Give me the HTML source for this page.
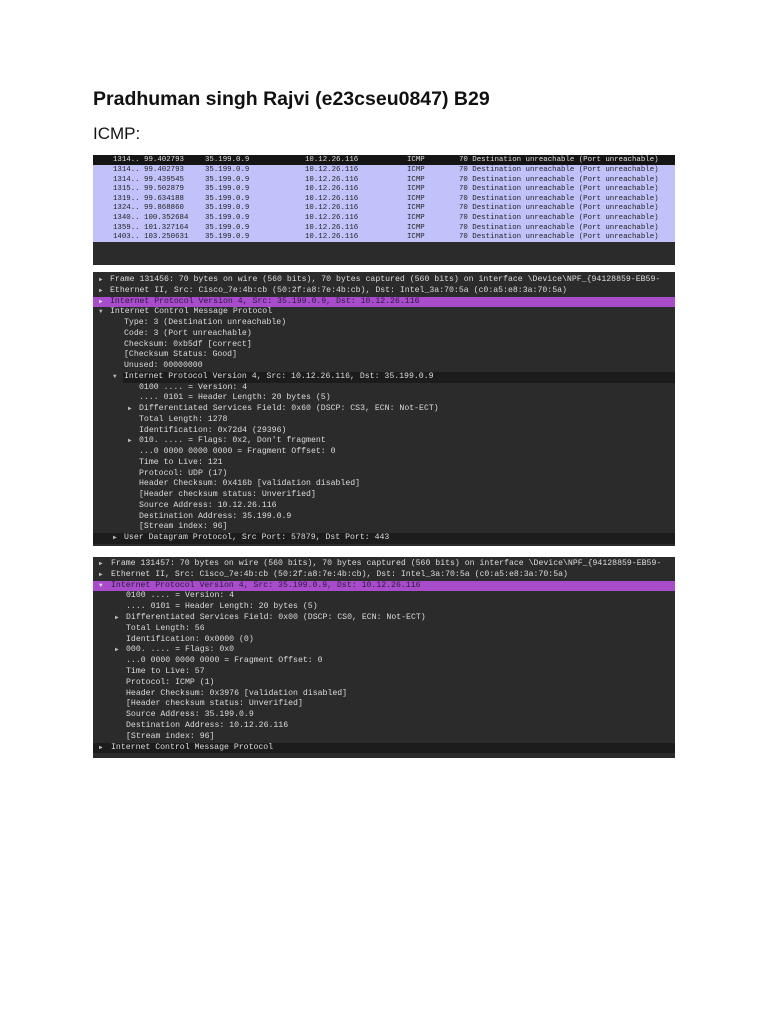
<!DOCTYPE html>
<html><head><meta charset="utf-8"><style>
body{margin:0;background:#fff;width:768px;height:1024px;position:relative;overflow:hidden}
.h1{position:absolute;left:93px;top:88px;font:bold 19.5px "Liberation Sans",sans-serif;color:#111}
.h2{position:absolute;left:93px;top:124px;font:17px "Liberation Sans",sans-serif;color:#111}
.p{position:absolute;left:93px;width:582px;background:#2b2b2b;overflow:hidden}
.l{position:absolute;left:0;right:0;height:10.75px;font:8.2px/10.75px "Liberation Mono",monospace;color:#dcdcdc;white-space:pre}
.l span{position:absolute}
.a{position:absolute;font-size:6px;color:#bbb}
.sel{background:#a84ccc;color:#2a1a3a}
.dk{background:#1c1c1c}
.r{position:absolute;left:0;right:0;height:9.6px;font:7.4px/9.6px "Liberation Mono",monospace;color:#222;background:#c2c2fa;white-space:pre}
.r span{position:absolute;top:1px;line-height:9.6px;height:9.6px}
</style></head><body>
<div class="h1">Pradhuman singh Rajvi (e23cseu0847) B29</div>
<div class="h2">ICMP:</div>

<div class="p" style="top:155px;height:110px;background:#2b2b2b">
<div class="r" style="top:0;background:#151515;color:#e0e0e0;height:10px"><span style="left:20px">1314.. 99.402793</span><span style="left:112px">35.199.0.9</span><span style="left:212px">10.12.26.116</span><span style="left:314px">ICMP</span><span style="left:366px">70 Destination unreachable (Port unreachable)</span></div>
<div class="r" style="top:10px"><span style="left:20px">1314.. 99.402793</span><span style="left:112px">35.199.0.9</span><span style="left:212px">10.12.26.116</span><span style="left:314px">ICMP</span><span style="left:366px">70 Destination unreachable (Port unreachable)</span></div>
<div class="r" style="top:19.6px"><span style="left:20px">1314.. 99.439545</span><span style="left:112px">35.199.0.9</span><span style="left:212px">10.12.26.116</span><span style="left:314px">ICMP</span><span style="left:366px">70 Destination unreachable (Port unreachable)</span></div>
<div class="r" style="top:29.2px"><span style="left:20px">1315.. 99.502879</span><span style="left:112px">35.199.0.9</span><span style="left:212px">10.12.26.116</span><span style="left:314px">ICMP</span><span style="left:366px">70 Destination unreachable (Port unreachable)</span></div>
<div class="r" style="top:38.8px"><span style="left:20px">1319.. 99.634188</span><span style="left:112px">35.199.0.9</span><span style="left:212px">10.12.26.116</span><span style="left:314px">ICMP</span><span style="left:366px">70 Destination unreachable (Port unreachable)</span></div>
<div class="r" style="top:48.4px"><span style="left:20px">1324.. 99.868860</span><span style="left:112px">35.199.0.9</span><span style="left:212px">10.12.26.116</span><span style="left:314px">ICMP</span><span style="left:366px">70 Destination unreachable (Port unreachable)</span></div>
<div class="r" style="top:58px"><span style="left:20px">1340.. 100.352684</span><span style="left:112px">35.199.0.9</span><span style="left:212px">10.12.26.116</span><span style="left:314px">ICMP</span><span style="left:366px">70 Destination unreachable (Port unreachable)</span></div>
<div class="r" style="top:67.6px"><span style="left:20px">1359.. 101.327164</span><span style="left:112px">35.199.0.9</span><span style="left:212px">10.12.26.116</span><span style="left:314px">ICMP</span><span style="left:366px">70 Destination unreachable (Port unreachable)</span></div>
<div class="r" style="top:77.2px"><span style="left:20px">1403.. 103.250631</span><span style="left:112px">35.199.0.9</span><span style="left:212px">10.12.26.116</span><span style="left:314px">ICMP</span><span style="left:366px">70 Destination unreachable (Port unreachable)</span></div>
</div>

<div class="p" style="top:272px;height:274px">
<div class="l" style="top:3px"><span class="a" style="left:6px">▶</span><span style="left:17px">Frame 131456: 70 bytes on wire (560 bits), 70 bytes captured (560 bits) on interface \Device\NPF_{94128859-EB59-</span></div>
<div class="l" style="top:13.75px"><span class="a" style="left:6px">▶</span><span style="left:17px">Ethernet II, Src: Cisco_7e:4b:cb (50:2f:a8:7e:4b:cb), Dst: Intel_3a:70:5a (c0:a5:e8:3a:70:5a)</span></div>
<div class="l sel" style="top:24.5px"><span class="a" style="left:6px;color:#ddd">▶</span><span style="left:17px">Internet Protocol Version 4, Src: 35.199.0.9, Dst: 10.12.26.116</span></div>
<div class="l" style="top:35.25px"><span class="a" style="left:6px">▼</span><span style="left:17px">Internet Control Message Protocol</span></div>
<div class="l" style="top:46px"><span style="left:31px">Type: 3 (Destination unreachable)</span></div>
<div class="l" style="top:56.75px"><span style="left:31px">Code: 3 (Port unreachable)</span></div>
<div class="l" style="top:67.5px"><span style="left:31px">Checksum: 0xb5df [correct]</span></div>
<div class="l" style="top:78.25px"><span style="left:31px">[Checksum Status: Good]</span></div>
<div class="l" style="top:89px"><span style="left:31px">Unused: 00000000</span></div>
<div class="l dk" style="top:99.75px;left:30px"><span class="a" style="left:-10px">▼</span><span style="left:1px">Internet Protocol Version 4, Src: 10.12.26.116, Dst: 35.199.0.9</span></div>
<div class="l" style="top:110.5px"><span style="left:46px">0100 .... = Version: 4</span></div>
<div class="l" style="top:121.25px"><span style="left:46px">.... 0101 = Header Length: 20 bytes (5)</span></div>
<div class="l" style="top:132px"><span class="a" style="left:35px">▶</span><span style="left:46px">Differentiated Services Field: 0x60 (DSCP: CS3, ECN: Not-ECT)</span></div>
<div class="l" style="top:142.75px"><span style="left:46px">Total Length: 1278</span></div>
<div class="l" style="top:153.5px"><span style="left:46px">Identification: 0x72d4 (29396)</span></div>
<div class="l" style="top:164.25px"><span class="a" style="left:35px">▶</span><span style="left:46px">010. .... = Flags: 0x2, Don't fragment</span></div>
<div class="l" style="top:175px"><span style="left:46px">...0 0000 0000 0000 = Fragment Offset: 0</span></div>
<div class="l" style="top:185.75px"><span style="left:46px">Time to Live: 121</span></div>
<div class="l" style="top:196.5px"><span style="left:46px">Protocol: UDP (17)</span></div>
<div class="l" style="top:207.25px"><span style="left:46px">Header Checksum: 0x416b [validation disabled]</span></div>
<div class="l" style="top:218px"><span style="left:46px">[Header checksum status: Unverified]</span></div>
<div class="l" style="top:228.75px"><span style="left:46px">Source Address: 10.12.26.116</span></div>
<div class="l" style="top:239.5px"><span style="left:46px">Destination Address: 35.199.0.9</span></div>
<div class="l" style="top:250.25px"><span style="left:46px">[Stream index: 96]</span></div>
<div class="l dk" style="top:261px"><span class="a" style="left:20px">▶</span><span style="left:31px">User Datagram Protocol, Src Port: 57879, Dst Port: 443</span></div>
</div>

<div class="p" style="top:557px;height:201px">
<div class="l" style="top:2px"><span class="a" style="left:6px">▶</span><span style="left:18px">Frame 131457: 70 bytes on wire (560 bits), 70 bytes captured (560 bits) on interface \Device\NPF_{94128859-EB59-</span></div>
<div class="l" style="top:12.8px"><span class="a" style="left:6px">▶</span><span style="left:18px">Ethernet II, Src: Cisco_7e:4b:cb (50:2f:a8:7e:4b:cb), Dst: Intel_3a:70:5a (c0:a5:e8:3a:70:5a)</span></div>
<div class="l sel" style="top:23.6px"><span class="a" style="left:6px;color:#ddd">▼</span><span style="left:18px">Internet Protocol Version 4, Src: 35.199.0.9, Dst: 10.12.26.116</span></div>
<div class="l" style="top:34.4px"><span style="left:33px">0100 .... = Version: 4</span></div>
<div class="l" style="top:45.2px"><span style="left:33px">.... 0101 = Header Length: 20 bytes (5)</span></div>
<div class="l" style="top:56px"><span class="a" style="left:22px">▶</span><span style="left:33px">Differentiated Services Field: 0x00 (DSCP: CS0, ECN: Not-ECT)</span></div>
<div class="l" style="top:66.8px"><span style="left:33px">Total Length: 56</span></div>
<div class="l" style="top:77.6px"><span style="left:33px">Identification: 0x0000 (0)</span></div>
<div class="l" style="top:88.4px"><span class="a" style="left:22px">▶</span><span style="left:33px">000. .... = Flags: 0x0</span></div>
<div class="l" style="top:99.2px"><span style="left:33px">...0 0000 0000 0000 = Fragment Offset: 0</span></div>
<div class="l" style="top:110px"><span style="left:33px">Time to Live: 57</span></div>
<div class="l" style="top:120.8px"><span style="left:33px">Protocol: ICMP (1)</span></div>
<div class="l" style="top:131.6px"><span style="left:33px">Header Checksum: 0x3976 [validation disabled]</span></div>
<div class="l" style="top:142.4px"><span style="left:33px">[Header checksum status: Unverified]</span></div>
<div class="l" style="top:153.2px"><span style="left:33px">Source Address: 35.199.0.9</span></div>
<div class="l" style="top:164px"><span style="left:33px">Destination Address: 10.12.26.116</span></div>
<div class="l" style="top:174.8px"><span style="left:33px">[Stream index: 96]</span></div>
<div class="l dk" style="top:185.6px"><span class="a" style="left:6px">▶</span><span style="left:18px">Internet Control Message Protocol</span></div>
</div>
</body></html>
